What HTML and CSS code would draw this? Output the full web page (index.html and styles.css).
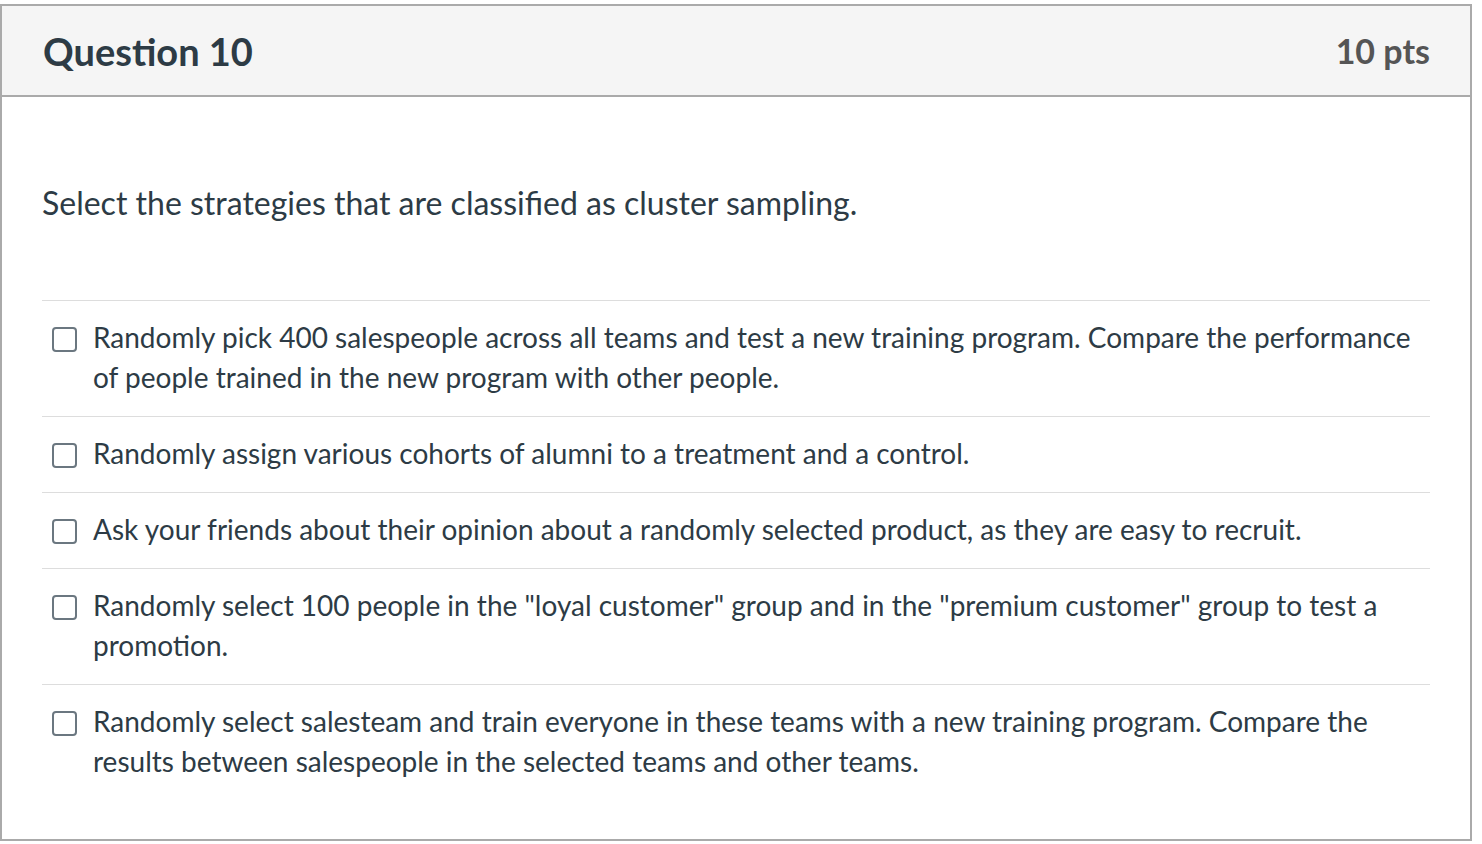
FILE: index.html
```
<!DOCTYPE html>
<html>
<head>
<meta charset="utf-8">
<link rel="stylesheet" href="styles.css">
</head>
<body>
<div class="question">
  <div class="header">
    <h2 class="title">Question 10</h2>
    <div class="pts">10 pts</div>
  </div>
  <div class="body">
    <p class="text">Select the strategies that are classified as cluster sampling.</p>
    <div class="answers">
      <label class="answer"><span class="box"></span><span class="label">Randomly pick 400 salespeople across all teams and test a new training program. Compare the performance of people trained in the new program with other people.</span></label>
      <label class="answer"><span class="box"></span><span class="label">Randomly assign various cohorts of alumni to a treatment and a control.</span></label>
      <label class="answer"><span class="box"></span><span class="label">Ask your friends about their opinion about a randomly selected product, as they are easy to recruit.</span></label>
      <label class="answer"><span class="box"></span><span class="label">Randomly select 100 people in the "loyal customer" group and in the "premium customer" group to test a promotion.</span></label>
      <label class="answer"><span class="box"></span><span class="label">Randomly select salesteam and train everyone in these teams with a new training program. Compare the results between salespeople in the selected teams and other teams.</span></label>
    </div>
  </div>
</div>
</body>
</html>
```

FILE: styles.css
```
html, body {
  margin: 0;
  padding: 0;
  background: #ffffff;
}
body {
  font-family: Lato, "Open Sans", sans-serif;
  color: #2d3b45;
}
.question {
  margin-top: 4px;
  width: 1468px;
  height: 833px;
  border: 2px solid #aaaaaa;
}
.header {
  height: 89px;
  background: #f5f5f5;
  border-bottom: 2px solid #aaaaaa;
  display: flex;
  align-items: center;
  justify-content: space-between;
  padding: 0 40px 0 41px;
}
.title {
  margin: 0;
  font-size: 38px;
  font-weight: 700;
  color: #2d3b45;
}
.pts {
  font-size: 34px;
  font-weight: 700;
  color: #555555;
}
.body {
  padding: 86px 40px 0 40px;
}
.text {
  margin: 0;
  font-size: 32px;
  line-height: 40px;
}
.answers {
  margin-top: 77px;
}
.answer {
  display: flex;
  align-items: flex-start;
  border-top: 1px solid #dddddd;
  padding: 16px 0 19px 10px;
}
.box {
  flex: none;
  width: 21px;
  height: 21px;
  border: 2px solid #6b7780;
  border-radius: 4px;
  margin-top: 10px;
  margin-right: 16px;
}
.label {
  font-size: 28px;
  line-height: 40px;
}
```
